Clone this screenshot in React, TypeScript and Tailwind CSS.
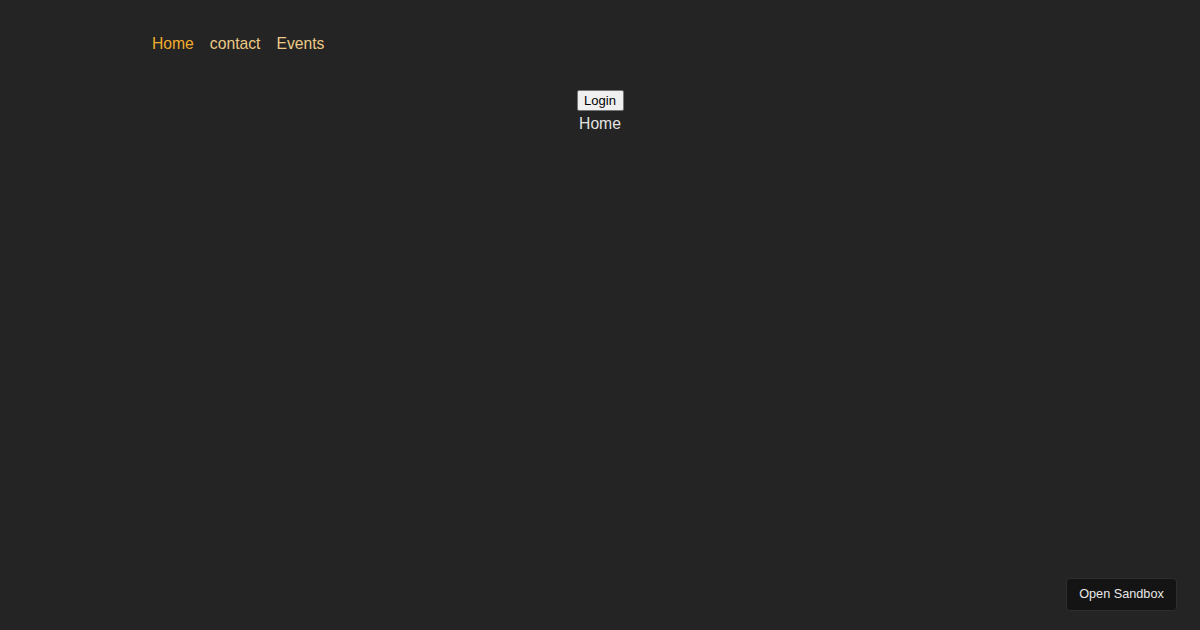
export default function App() {
  return (
    <div className="relative min-h-[630px] w-full bg-[#242424] text-[rgba(255,255,255,0.87)]" style={{ fontFamily: '"Liberation Sans", Arial, sans-serif' }}>
      <nav className="flex gap-4 pl-[152px] pt-[34px] text-[15.7px] leading-[20px]">
        <a className="text-[#f3ac2c]">Home</a>
        <a className="text-[#ecc985]">contact</a>
        <a className="text-[#ecc985]">Events</a>
      </nav>
      <div className="mt-[36px] flex flex-col items-center">
        <button className="flex h-[21px] w-[47px] items-center justify-center rounded-[2px] border border-[#767676] bg-[#efefef] text-[13px] leading-[15px] text-black">
          Login
        </button>
        <div className="mt-[3px] text-[15.7px] leading-[20px] text-[#e3e3e3]">Home</div>
      </div>
      <button className="absolute bottom-[19px] right-[23px] flex h-[33px] w-[111px] items-center justify-center rounded-[4px] border border-[#2e2e2e] bg-[#141414] pt-[1px] text-[12.7px] text-[#e8e8e8]">
        Open Sandbox
      </button>
    </div>
  );
}
